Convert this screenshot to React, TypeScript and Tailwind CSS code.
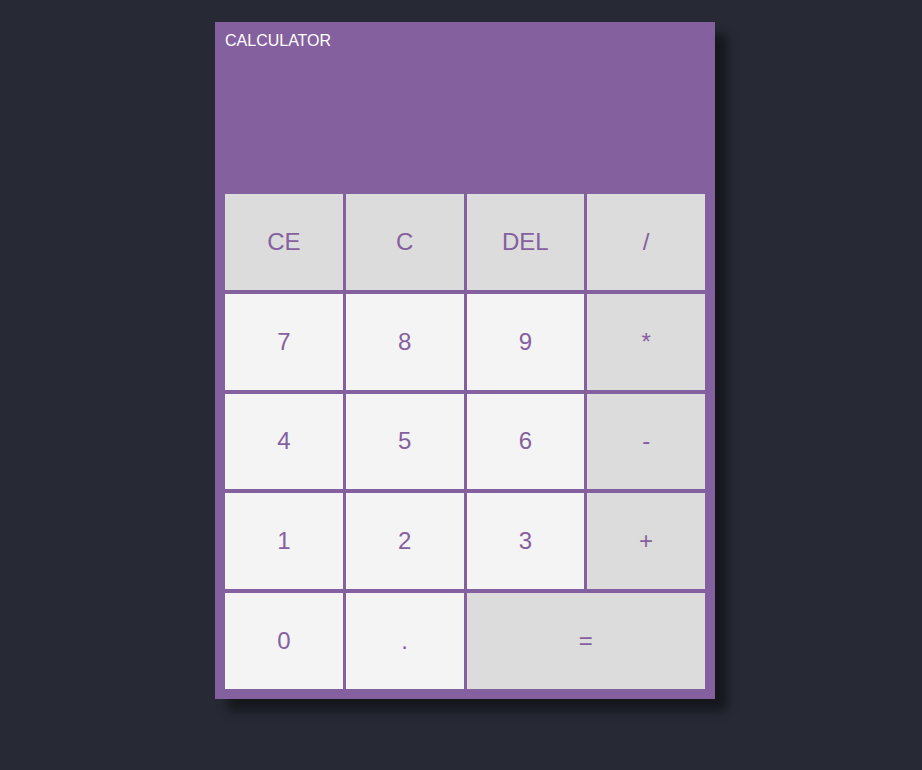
import React from 'react';

type Key = { label: string; op?: boolean; wide?: boolean };

const KEYS: Key[] = [
  { label: 'CE', op: true },
  { label: 'C', op: true },
  { label: 'DEL', op: true },
  { label: '/', op: true },
  { label: '7' },
  { label: '8' },
  { label: '9' },
  { label: '*', op: true },
  { label: '4' },
  { label: '5' },
  { label: '6' },
  { label: '-', op: true },
  { label: '1' },
  { label: '2' },
  { label: '3' },
  { label: '+', op: true },
  { label: '0' },
  { label: '.' },
  { label: '=', op: true, wide: true },
];

export default function App() {
  return (
    <div className="min-h-[770px] w-full bg-[#272a35] pt-[22px]" style={{ fontFamily: '"Liberation Sans", Arial, sans-serif' }}>
      <div className="mx-auto w-[500px] translate-x-[4px] bg-[#85609f] px-[10px] pt-[10px] pb-[10px] shadow-[12px_12px_10px_rgba(0,0,0,0.45)]">
        {/* Display */}
        <div className="h-[162px] text-[16px] leading-[18px] text-white">CALCULATOR</div>

        {/* Keypad */}
        <div className="grid h-[495px] grid-cols-4 grid-rows-5 gap-x-[3px] gap-y-[4px]">
          {KEYS.map((k) => (
            <button
              key={k.label}
              className={
                'flex items-center justify-center text-[24px] text-[#85609f] ' +
                (k.op ? 'bg-[#dcdcdc] ' : 'bg-[#f4f4f4] ') +
                (k.wide ? 'col-span-2' : '')
              }
            >
              {k.label}
            </button>
          ))}
        </div>
      </div>
    </div>
  );
}
